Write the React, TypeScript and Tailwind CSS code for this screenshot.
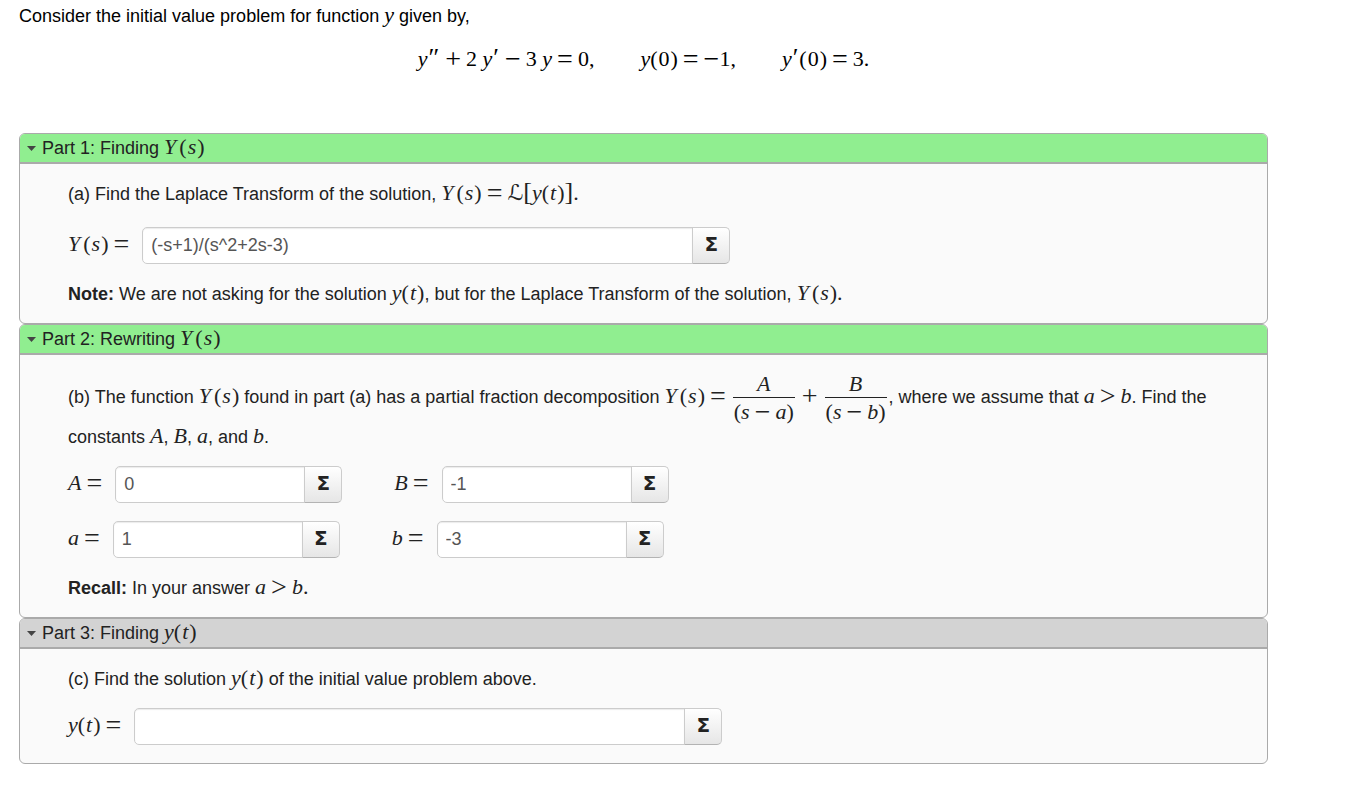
import { useState } from "react";
import type { ReactNode } from "react";

const MathText = ({ children }: { children: ReactNode }) => (
  <span className="font-['Liberation_Serif',serif] text-[22px] leading-none whitespace-nowrap">
    {children}
  </span>
);

const V = ({ children }: { children: ReactNode }) => (
  <var className="italic">{children}</var>
);

const Op = ({ children }: { children: ReactNode }) => (
  <span className="mx-[5px] align-[-2px] text-[28px] leading-none">{children}</span>
);

const Prime = ({ children }: { children: ReactNode }) => (
  <span className="mx-px text-[26px] leading-none">{children}</span>
);

const Paren = ({ children }: { children: ReactNode }) => (
  <>
    (<span className="px-px">{children}</span>)
  </>
);

const Ys = () => (
  <>
    <var className="mr-[3px] italic">Y</var>
    <Paren>
      <V>s</V>
    </Paren>
  </>
);

const Yt = () => (
  <>
    <V>y</V>
    <Paren>
      <V>t</V>
    </Paren>
  </>
);

const Fraction = ({ top, bottom }: { top: string; bottom: string }) => (
  <span className="mx-0.5 inline-flex flex-col items-center align-middle">
    <span className="h-[26px] leading-[26px] italic">{top}</span>
    <span className="h-[27px] border-t border-[#222] px-px leading-[26px]">
      (<V>s</V>
      <Op>−</Op>
      <V>{bottom}</V>)
    </span>
  </span>
);

interface FieldProps {
  id: string;
  label: ReactNode;
  initial: string;
  wide?: boolean;
}

const Field = ({ id, label, initial, wide = false }: FieldProps) => {
  const [value, setValue] = useState<string>(initial);

  return (
    <div className="flex items-center">
      <label htmlFor={id} className="mr-2 h-8 leading-[30px]">
        <MathText>
          {label}
          <Op>=</Op>
        </MathText>
      </label>
      <div className="flex">
        <input
          id={id}
          type="text"
          value={value}
          onChange={(e) => setValue(e.target.value)}
          className={`h-[37px] rounded-l-[5px] border border-[#ccc] bg-white px-2 text-[18px] text-[#555] shadow-[inset_0_1px_1px_rgba(0,0,0,0.08)] outline-none ${
            wide ? "w-[551px]" : "w-[190px]"
          }`}
        />
        <button
          type="button"
          aria-label="Open equation editor"
          className="-ml-px h-[37px] w-[38px] rounded-r-[5px] border border-[#ccc] border-b-[#b3b3b3] bg-linear-to-b from-white to-[#e6e6e6] pb-1 font-['DejaVu_Sans',sans-serif] text-[20px] leading-none font-bold text-[#222]"
        >
          Σ
        </button>
      </div>
    </div>
  );
};

interface PartProps {
  title: ReactNode;
  done?: boolean;
  children: ReactNode;
}

const Part = ({ title, done = false, children }: PartProps) => (
  <details
    open
    className="group overflow-hidden rounded-[6px] border border-[#aaa] bg-[#fafafa] text-[#222]"
  >
    <summary
      className={`flex h-[30px] cursor-pointer list-none items-center gap-1.5 border-b-2 border-[#aaa] pl-[7px] ${
        done ? "bg-[#90ee90]" : "bg-[#d3d3d3]"
      }`}
    >
      <svg viewBox="0 0 9 5" className="h-[5px] w-[9px] -rotate-90 fill-[#444] group-open:rotate-0">
        <path d="M0 0h9L4.5 5z" />
      </svg>
      <span className="leading-[28px]">{title}</span>
    </summary>
    <div className="pr-6 pl-12">{children}</div>
  </details>
);

export default function App() {
  return (
    <main className="min-h-screen bg-white pt-px pr-[79px] pb-5 pl-[19px] font-['Liberation_Sans',Arial,sans-serif] text-[18px] leading-[30px] text-black">
      <p>
        Consider the initial value problem for function{" "}
        <MathText>
          <V>y</V>
        </MathText>{" "}
        given by,
      </p>

      <div className="mt-3 mb-[58px] flex h-8 items-center justify-center gap-[46px]">
        <MathText>
          <V>y</V>
          <Prime>″</Prime>
          <Op>+</Op>2 <V>y</V>
          <Prime>′</Prime>
          <Op>−</Op>3 <V>y</V>
          <Op>=</Op>0,
        </MathText>
        <MathText>
          <V>y</V>
          <Paren>0</Paren>
          <Op>=</Op>
          <span className="align-[-2px] text-[28px] leading-none">−</span>1,
        </MathText>
        <MathText>
          <V>y</V>
          <Prime>′</Prime>
          <Paren>0</Paren>
          <Op>=</Op>3.
        </MathText>
      </div>

      <Part
        done
        title={
          <>
            Part 1: Finding{" "}
            <MathText>
              <Ys />
            </MathText>
          </>
        }
      >
        <p className="pt-[15px]">
          (a) Find the Laplace Transform of the solution,{" "}
          <MathText>
            <Ys />
            <Op>=</Op>
            <span className="font-['DejaVu_Sans',sans-serif] text-[22px]">ℒ</span>
            <span className="text-[26px]">[</span>
            <Yt />
            <span className="text-[26px]">]</span>.
          </MathText>
        </p>
        <div className="mt-[18px]">
          <Field id="laplace" wide label={<Ys />} initial="(-s+1)/(s^2+2s-3)" />
        </div>
        <p className="pt-[15px] pb-[14px]">
          <strong>Note:</strong> We are not asking for the solution{" "}
          <MathText>
            <Yt />
          </MathText>
          , but for the Laplace Transform of the solution,{" "}
          <MathText>
            <Ys />.
          </MathText>
        </p>
      </Part>

      <Part
        done
        title={
          <>
            Part 2: Rewriting{" "}
            <MathText>
              <Ys />
            </MathText>
          </>
        }
      >
        <p className="pt-4 leading-[26px]">
          (b) The function{" "}
          <MathText>
            <Ys />
          </MathText>{" "}
          found in part (a) has a partial fraction decomposition{" "}
          <MathText>
            <Ys />
            <Op>=</Op>
            <Fraction top="A" bottom="a" />
            <Op>+</Op>
            <Fraction top="B" bottom="b" />
          </MathText>
          , where we assume that{" "}
          <MathText>
            <V>a</V>
            <Op>&gt;</Op>
            <V>b</V>
          </MathText>
          . Find the{" "}
          <span>constants </span>
          <MathText>
            <V>A</V>
          </MathText>
          ,{" "}
          <MathText>
            <V>B</V>
          </MathText>
          ,{" "}
          <MathText>
            <V>a</V>
          </MathText>
          , and{" "}
          <MathText>
            <V>b</V>
          </MathText>
          .
        </p>
        <div className="mt-4 flex gap-[52px]">
          <Field id="coef-A" label={<V>A</V>} initial="0" />
          <Field id="coef-B" label={<V>B</V>} initial="-1" />
        </div>
        <div className="mt-[18px] flex gap-[52px]">
          <Field id="root-a" label={<V>a</V>} initial="1" />
          <Field id="root-b" label={<V>b</V>} initial="-3" />
        </div>
        <p className="pt-[15px] pb-[14px]">
          <strong>Recall:</strong> In your answer{" "}
          <MathText>
            <V>a</V>
            <Op>&gt;</Op>
            <V>b</V>.
          </MathText>
        </p>
      </Part>

      <Part
        title={
          <>
            Part 3: Finding{" "}
            <MathText>
              <Yt />
            </MathText>
          </>
        }
      >
        <p className="pt-[15px]">
          (c) Find the solution{" "}
          <MathText>
            <Yt />
          </MathText>{" "}
          of the initial value problem above.
        </p>
        <div className="mt-[14px] mb-[18px]">
          <Field id="solution" wide label={<Yt />} initial="" />
        </div>
      </Part>
    </main>
  );
}
